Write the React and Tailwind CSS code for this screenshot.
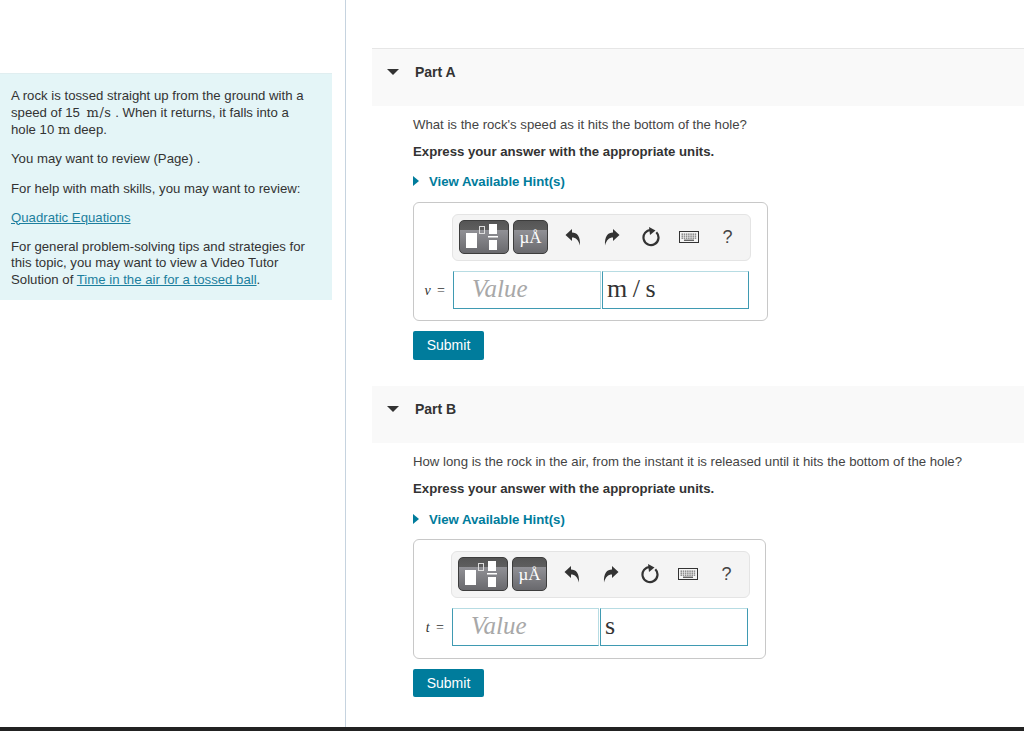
const TemplateIcon = () => (
    <svg width="50" height="34" viewBox="0 0 50 34" className="block shrink-0">
        <rect x="7" y="13" width="11" height="15" fill="#fff" />
        <rect x="20.5" y="6.5" width="5" height="7" fill="none" stroke="#ddd" strokeWidth="1" />
        <rect x="30" y="4" width="8" height="10" fill="#fff" />
        <rect x="29" y="16" width="10" height="1.5" fill="#fff" />
        <rect x="30" y="20" width="8" height="10" fill="#fff" />
    </svg>
);

const ReplyIcon = ({ flip }) => (
    <svg width="16" height="17" viewBox="0 0 16 17" className={`block ${flip ? "-scale-x-100" : ""}`}>
        <path d="M0.5 6 L7 0 V3.5 C12 3.5 15.5 7 15 16.5 C13.5 11 11 8.5 7 8.5 V12 Z" fill="#333" />
    </svg>
);

const RefreshIcon = () => (
    <svg width="20" height="20" viewBox="0 0 20 20" className="block">
        <path d="M10 3 A7.5 7.5 0 1 0 15.3 5.2" fill="none" stroke="#333" strokeWidth="2.2" />
        <path d="M8 0 L14.5 3.5 L9 8 Z" fill="#333" />
    </svg>
);

const KeyboardIcon = () => {
    const keys = [];
    for (let r = 0; r < 3; r++) {
        for (let c = 0; c < 7; c++) {
            keys.push(<rect key={`${r}-${c}`} x={2.5 + c * 2.2} y={2.5 + r * 2} width="1.5" height="1.3" fill="#777" />);
        }
    }
    return (
        <svg width="20" height="12" viewBox="0 0 20 12" className="block">
            <rect x="0.5" y="0.5" width="19" height="11" fill="#f4f4f4" stroke="#333" />
            {keys}
            <rect x="5" y="8.6" width="10" height="1.3" fill="#555" />
        </svg>
    );
};

function Toolbar() {
    return (
        <div className="w-[299px] h-[47px] flex items-start pt-[5px] pl-[6px] bg-[#f4f4f4] border border-[#e4e4e4] rounded-md">
            <div className="w-[50px] h-[34px] rounded-[5px] border border-[#3d3d3d] overflow-hidden bg-[linear-gradient(#555_0,#5e5e5e_28%,#919196_28%,#69696d_100%)] flex items-center justify-center">
                <TemplateIcon />
            </div>
            <div className="ml-[4px] w-[35px] h-[34px] rounded-[5px] border border-[#3d3d3d] overflow-hidden bg-[linear-gradient(#555_0,#5e5e5e_28%,#919196_28%,#69696d_100%)] flex items-center justify-center text-white text-[17px] font-['Liberation_Serif',serif]">
                µÅ
            </div>
            <div className="ml-[5px] h-[34px] flex items-center text-[#333]">
                <div className="w-[39px] flex justify-center"><ReplyIcon /></div>
                <div className="w-[39px] flex justify-center"><ReplyIcon flip /></div>
                <div className="w-[39px] flex justify-center"><RefreshIcon /></div>
                <div className="w-[38px] flex justify-center"><KeyboardIcon /></div>
                <div className="w-[39px] text-center text-[18px] text-[#444]">?</div>
            </div>
        </div>
    );
}

function Part({ title, question, symbol, unit, first }) {
    return (
        <section className={first ? "" : "mt-[26px]"}>
            <div className={`flex items-start bg-[#f9f9f9] ${first ? "h-[58px] border-t border-[#e6e6e6]" : "h-[57px]"}`}>
                <div className="ml-[15px] mt-[20px] w-0 h-0 border-x-[6px] border-x-transparent border-t-[6px] border-t-[#333]" />
                <h2 className="ml-[16px] mt-[15px] text-[14px] leading-[17px] font-bold text-[#333]">{title}</h2>
            </div>
            <div className="ml-[41px] pt-[10px] text-[13.2px] leading-[17px] text-[#333]">
                <p className="text-[#444]">{question}</p>
                <p className="mt-[9.5px] font-bold">Express your answer with the appropriate units.</p>
                <div className={`flex items-center text-[#007c9c] font-bold ${first ? "mt-[13px]" : "mt-[14px]"}`}>
                    <span className="w-0 h-0 border-y-[5px] border-y-transparent border-l-[6px] border-l-[#007c9c]" />
                    <span className="ml-[10px]">View Available Hint(s)</span>
                </div>
                <div className={`rounded-md border border-[#c8c8c8] ${first ? "mt-[12.5px] w-[355px] h-[119px] pt-[11px]" : "mt-[11.5px] w-[353px] h-[120px] pt-[11px]"}`}>
                    <div className={first ? "ml-[38px]" : "ml-[37px]"}>
                        <Toolbar />
                    </div>
                    <div className="mt-[10px] flex items-center">
                        <span className={`text-right font-['Liberation_Serif',serif] text-[14px] [word-spacing:3px] text-[#333] ${first ? "w-[31px]" : "w-[30px]"}`}>
                            <i>{symbol}</i> =
                        </span>
                        <div className={`ml-[8px] h-[38px] border border-[#3f9ab2] border-t-[#b7dce3] border-r-[#b7dce3] pl-[18px] pb-[3px] flex items-center font-['Liberation_Serif',serif] italic text-[25px] text-[#a8a8a8] ${first ? "w-[148px]" : "w-[147px]"}`}>
                            Value
                        </div>
                        <div className={`ml-[1px] h-[38px] border border-[#3f9ab2] border-t-[#b7dce3] pl-[4px] pb-[3px] flex items-center font-['Liberation_Serif',serif] text-[26px] [word-spacing:-1px] text-[#333] ${first ? "w-[147px]" : "w-[148px]"}`}>
                            {unit}
                        </div>
                    </div>
                </div>
                <button className={`block mt-[10px] w-[71px] bg-[#007c9c] rounded-[2px] text-white text-[14px] ${first ? "h-[29px]" : "h-[28px]"}`}>
                    Submit
                </button>
            </div>
        </section>
    );
}

export default function App() {
    return (
        <div className="h-screen flex flex-col overflow-hidden bg-white font-['Liberation_Sans',Arial,sans-serif]">
            <div className="flex-1 flex min-h-0">
                <aside className="w-[346px] shrink-0 border-r border-[#c6d3df] pt-[73px]">
                    <div className="w-[332px] h-[227px] bg-[#e4f5f7] border-t border-[#e0eef0] pt-[13px] pl-[11px] pr-[20px] text-[13.2px] leading-[16.5px] text-[#333]">
                        <p className="leading-[17px]">
                            A rock is tossed straight up from the ground with a speed of 15{" "}
                            <span className="ml-[3px] font-['DejaVu_Serif',serif] text-[13px] leading-none tracking-[0.5px]">m/s</span> . When it returns, it falls into a hole 10{" "}
                            <span className="font-['DejaVu_Serif',serif] text-[13px] leading-none">m</span> deep.
                        </p>
                        <p className="mt-[13px]">You may want to review (Page) .</p>
                        <p className="mt-[13px]">For help with math skills, you may want to review:</p>
                        <p className="mt-[12.5px]"><a className="text-[#1c7f9e] underline">Quadratic Equations</a></p>
                        <p className="mt-[12.5px]">
                            For general problem-solving tips and strategies for this topic, you may want to view a Video Tutor Solution of{" "}
                            <a className="text-[#1c7f9e] underline">Time in the air for a tossed ball</a>.
                        </p>
                    </div>
                </aside>
                <main className="flex-1 pl-[26px] pt-[48px]">
                    <Part
                        first
                        title="Part A"
                        question="What is the rock's speed as it hits the bottom of the hole?"
                        symbol="v"
                        unit="m / s"
                    />
                    <Part
                        title="Part B"
                        question="How long is the rock in the air, from the instant it is released until it hits the bottom of the hole?"
                        symbol="t"
                        unit="s"
                    />
                </main>
            </div>
            <div className="h-[4px] bg-[#222]" />
        </div>
    );
}
